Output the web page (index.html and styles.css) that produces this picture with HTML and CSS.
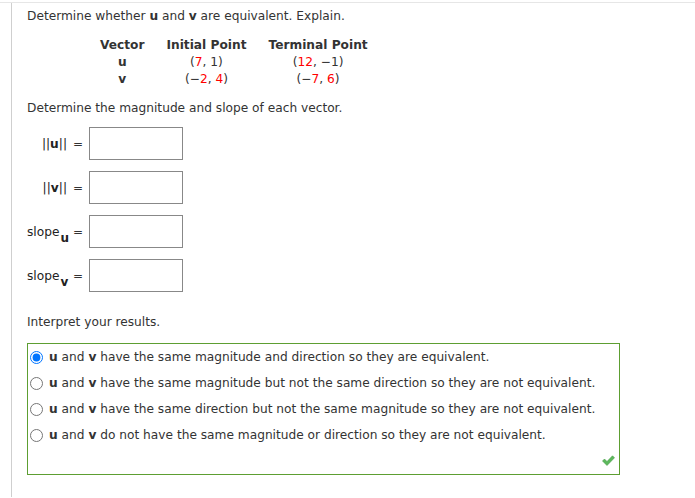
FILE: index.html
```html
<!DOCTYPE html>
<html>
<head>
<meta charset="utf-8">
<link rel="stylesheet" href="styles.css">
</head>
<body>
<div class="page">
  <div class="content">
    <p class="intro">Determine whether <b>u</b> and <b>v</b> are equivalent. Explain.</p>
    <table class="points">
      <tr><th>Vector</th><th>Initial Point</th><th>Terminal Point</th></tr>
      <tr><td><b>u</b></td><td>(<span class="r">7</span>, 1)</td><td>(<span class="r">12</span>, −1)</td></tr>
      <tr><td><b>v</b></td><td>(−<span class="r">2</span>, <span class="r">4</span>)</td><td>(−<span class="r">7</span>, <span class="r">6</span>)</td></tr>
    </table>
    <p class="sub">Determine the magnitude and slope of each vector.</p>
    <div class="answers">
      <div class="lbl">||<b>u</b>||</div><div class="eq">=</div><div class="box"></div>
      <div class="lbl">||<b>v</b>||</div><div class="eq">=</div><div class="box"></div>
      <div class="lbl">slope<sub>u</sub></div><div class="eq">=</div><div class="box"></div>
      <div class="lbl">slope<sub>v</sub></div><div class="eq">=</div><div class="box"></div>
    </div>
    <p class="interp">Interpret your results.</p>
    <div class="choices">
      <label class="opt"><input type="radio" name="c" checked><span><b>u</b> and <b>v</b> have the same magnitude and direction so they are equivalent.</span></label>
      <label class="opt"><input type="radio" name="c"><span><b>u</b> and <b>v</b> have the same magnitude but not the same direction so they are not equivalent.</span></label>
      <label class="opt"><input type="radio" name="c"><span><b>u</b> and <b>v</b> have the same direction but not the same magnitude so they are not equivalent.</span></label>
      <label class="opt"><input type="radio" name="c"><span><b>u</b> and <b>v</b> do not have the same magnitude or direction so they are not equivalent.</span></label>
      <div class="check">
        <svg width="13" height="11" viewBox="0 0 13 11"><path d="M0.5 6 L2.5 4 L5 6.5 L10.5 0.8 L12.5 2.8 L5 10.5 Z" fill="#5cb85c" stroke="#4a9d4a" stroke-width="0.6"/></svg>
      </div>
    </div>
  </div>
</div>
</body>
</html>
```

FILE: styles.css
```css
html, body {
  margin: 0;
  padding: 0;
  background: #fff;
}
body {
  font-family: "DejaVu Sans", Verdana, sans-serif;
  font-size: 12.2px;
  line-height: 16px;
  color: #333;
}
.page {
  margin-top: 2px;
  border-top: 1px solid #e6e6e6;
}
.content {
  margin-left: 11px;
  border-left: 1px solid #cfcfcf;
  padding-left: 15px;
  padding-top: 5px;
  min-height: 494px;
  box-sizing: border-box;
}
p { margin: 0; }
b { font-weight: bold; }
.points {
  margin: 13px 0 0 62px;
  border-collapse: collapse;
}
.points th, .points td {
  padding: 0 11px;
  line-height: 17px;
  text-align: center;
  font-weight: normal;
}
.points th { font-weight: bold; }
.r { color: #f00; }
.sub { margin-top: 12px; }
.answers {
  margin-top: 11px;
  display: grid;
  grid-template-columns: 40px 22px 94px;
  grid-auto-rows: 33px;
  row-gap: 11px;
  align-items: center;
}
.lbl {
  text-align: right;
  white-space: nowrap;
  color: #222;
}
.lbl sub {
  font-weight: bold;
  font-size: 12px;
  vertical-align: -6px;
  line-height: 0;
  margin-left: 1px;
}
.eq {
  text-align: center;
  font-size: 12px;
}
.box {
  height: 33px;
  border: 1px solid #888;
  box-sizing: border-box;
  background: #fff;
}
.interp { margin-top: 22px; }
.choices {
  margin-top: 13px;
  width: 593px;
  box-sizing: border-box;
  border: 1px solid #5d9e32;
  padding: 0 0 0 2px;
  position: relative;
  height: 132px;
}
.opt {
  display: flex;
  align-items: center;
  height: 26px;
  white-space: nowrap;
}
.opt input {
  margin: 0 6px 0 0;
  width: 13px;
  height: 13px;
}
.check {
  position: absolute;
  right: 4px;
  bottom: 8px;
  line-height: 0;
}
```
